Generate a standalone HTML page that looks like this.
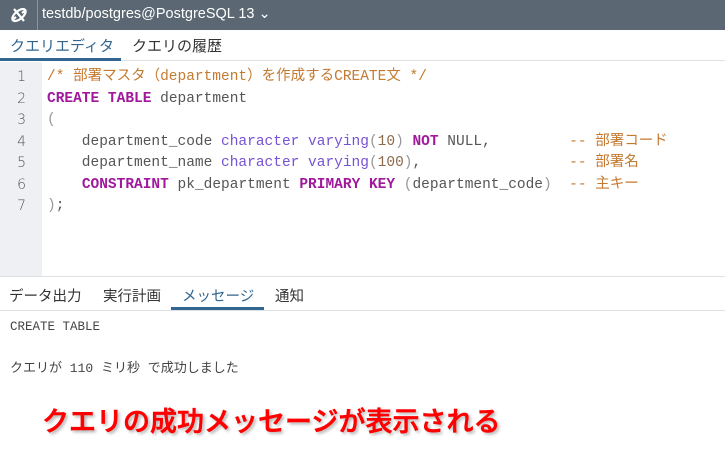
<!DOCTYPE html>
<html><head><meta charset="utf-8"><style>
*{margin:0;padding:0;box-sizing:border-box}
body{width:725px;height:454px;overflow:hidden;background:#fff;font-family:"Liberation Sans","Noto Sans CJK JP",sans-serif;position:relative}
.top{position:absolute;left:0;top:0;width:725px;height:30px;background:#5b6873}
.top .ic{position:absolute;left:0;top:0;width:38px;height:30px;border-right:1px solid #8896a0}
.top .t{position:absolute;left:42px;top:6px;color:#fff;font-size:14.5px}
.tabs{position:absolute;left:0;top:30px;width:725px;height:31px;border-bottom:1px solid #dde0e4;font-size:15px;color:#333}
.tabs span{position:absolute;top:5px}
.ul{position:absolute;height:3px;background:#326690}
.gut{position:absolute;left:0;top:62px;width:42px;height:214px;background:#eef0f3}
pre{font-family:"Liberation Mono","Noto Sans CJK JP",monospace;font-size:14.5px;line-height:21.5px;color:#555}
.nums{position:absolute;left:0;top:67px;width:26px;text-align:right;color:#555;font-family:"DejaVu Sans",sans-serif;font-size:14px;line-height:21.5px;font-weight:300}
.code{position:absolute;left:47px;top:67px}
.c{color:#c47a30}.k{color:#a0199c;font-weight:bold}.ty{color:#7652d6}.n{color:#8e6a4c}.p{color:#999}
.sep{position:absolute;left:0;top:276px;width:725px;height:1px;background:#dde0e4}
.btabs{position:absolute;left:0;top:277px;width:725px;height:34px;border-bottom:1px solid #dde0e4;font-size:14.5px;color:#333}
.btabs span{position:absolute;top:8px}
.msg{position:absolute;left:10px;font-family:"Liberation Mono","Noto Sans CJK JP",monospace;font-size:12.5px;color:#444}
.big{position:absolute;left:42px;top:400px;font-size:27px;font-weight:500;color:#f00;-webkit-text-stroke:0.6px #f00;text-shadow:2px 2px 3px rgba(0,0,0,.35);font-family:"Noto Sans CJK JP",sans-serif;white-space:nowrap}
</style></head><body>
<div class="top"><div class="ic"><svg width="38" height="30" viewBox="0 0 38 30"><g fill="none" stroke="#fff" stroke-width="2.2"><ellipse cx="19" cy="15" rx="8" ry="4" transform="rotate(-40 19 15)"/><path d="M12 20l4-3M22 13l4-3M14 9l10 12"/></g></svg></div><div class="t">testdb/postgres@PostgreSQL 13 ⌄</div></div>
<div class="tabs"><span style="left:10px;color:#326690">クエリエディタ</span><span style="left:132px">クエリの履歴</span><div class="ul" style="left:0;width:121px;top:28px"></div></div>
<div class="gut"></div>
<pre class="nums">1
2
3
4
5
6
7</pre>
<pre class="code"><span class="c">/* 部署マスタ（department）を作成するCREATE文 */</span>
<span class="k">CREATE TABLE</span> department
<span class="p">(</span>
    department_code <span class="ty">character varying</span><span class="p">(</span><span class="n">10</span><span class="p">)</span> <span class="k">NOT</span> NULL,         <span class="c">-- 部署コード</span>
    department_name <span class="ty">character varying</span><span class="p">(</span><span class="n">100</span><span class="p">)</span>,                 <span class="c">-- 部署名</span>
    <span class="k">CONSTRAINT</span> pk_department <span class="k">PRIMARY KEY</span> <span class="p">(</span>department_code<span class="p">)</span>  <span class="c">-- 主キー</span>
<span class="p">)</span>;</pre>
<div class="sep"></div>
<div class="btabs"><span style="left:9px">データ出力</span><span style="left:103px">実行計画</span><span style="left:182px;color:#326690">メッセージ</span><span style="left:275px">通知</span><div class="ul" style="left:171px;width:93px;top:30px"></div></div>
<div class="msg" style="top:320px">CREATE TABLE</div>
<div class="msg" style="top:357px;font-size:13px">クエリが 110 ミリ秒 で成功しました</div>
<div class="big">クエリの成功メッセージが表示される</div>
</body></html>
